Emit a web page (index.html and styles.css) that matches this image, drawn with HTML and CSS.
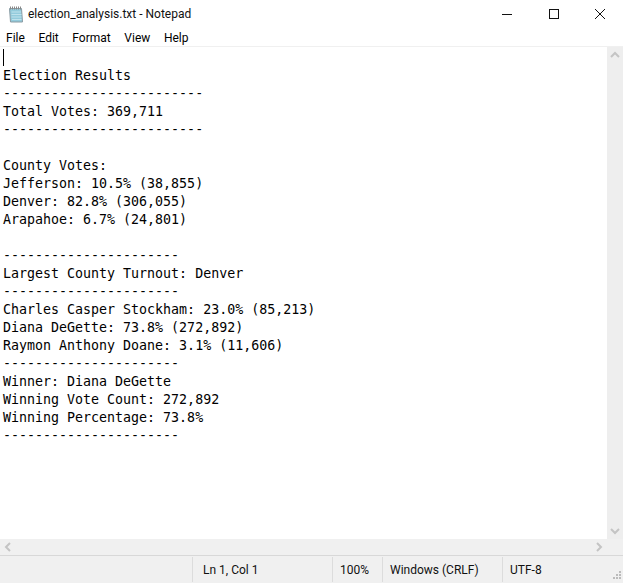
FILE: index.html
```html
<!DOCTYPE html>
<html lang="en">

<head>
  <meta charset="UTF-8">
  <title>election_analysis.txt - Notepad</title>
  <link rel="stylesheet" href="styles.css">
</head>

<body>
  <div class="titlebar">
    <svg class="appicon" width="18" height="18" viewBox="0 0 18 18">
      <path d="M2.500 3.500h12l1 13.500H3.500z" fill="#93cbdc" stroke="#8a9ba3"/>
      <path d="M4.500 7h9.500M4.500 9.500h10M4.500 12h10M5 14.500h9.500" stroke="#bfe2ec"/>
      <path d="M3.500 1.500v3M5.500 1.500v3M7.500 1.500v3M9.500 1.500v3M11.500 1.500v3M13.500 1.500v3" stroke="#888"/>
    </svg>
    <span class="title">election_analysis.txt - Notepad</span>
    <div class="controls">
      <svg class="ctl" width="46" height="24" viewBox="0 0 46 24"><path d="M17 12.500h10" stroke="#111"/></svg>
      <svg class="ctl" width="46" height="24" viewBox="0 0 46 24"><rect x="18.500" y="7.500" width="9" height="9" fill="none" stroke="#111"/></svg>
      <svg class="ctl" width="46" height="24" viewBox="0 0 46 24"><path d="M18 7l10 10M28 7L18 17" stroke="#111"/></svg>
    </div>
  </div>

  <div class="menubar">
    <span>File</span>
    <span>Edit</span>
    <span>Format</span>
    <span>View</span>
    <span>Help</span>
  </div>

  <div class="editor">
    <div class="textarea">
      <div class="caret"></div>
<pre class="text">

Election Results
-------------------------
Total Votes: 369,711
-------------------------

County Votes:
Jefferson: 10.5% (38,855)
Denver: 82.8% (306,055)
Arapahoe: 6.7% (24,801)

----------------------
Largest County Turnout: Denver
----------------------
Charles Casper Stockham: 23.0% (85,213)
Diana DeGette: 73.8% (272,892)
Raymon Anthony Doane: 3.1% (11,606)
----------------------
Winner: Diana DeGette
Winning Vote Count: 272,892
Winning Percentage: 73.8%
----------------------</pre>
    </div>
    <div class="vscroll">
      <svg width="16" height="16" viewBox="0 0 16 16"><path d="M4 10l4-4 4 4" fill="none" stroke="#c4c4c4" stroke-width="2"/></svg>
      <svg width="16" height="16" viewBox="0 0 16 16"><path d="M4 6l4 4 4-4" fill="none" stroke="#c4c4c4" stroke-width="2"/></svg>
    </div>
  </div>

  <div class="hscroll">
    <svg width="16" height="16" viewBox="0 0 16 16"><path d="M10 4L6 8l4 4" fill="none" stroke="#c4c4c4" stroke-width="2"/></svg>
    <svg width="16" height="16" viewBox="0 0 16 16"><path d="M6 4l4 4-4 4" fill="none" stroke="#c4c4c4" stroke-width="2"/></svg>
  </div>

  <div class="statusbar">
    <div class="cell cell-pos">Ln 1, Col 1</div>
    <div class="cell cell-zoom">100%</div>
    <div class="cell cell-eol">Windows (CRLF)</div>
    <div class="cell cell-enc">UTF-8</div>
    <svg class="grip" width="12" height="12" viewBox="0 0 12 12">
      <path d="M9 2h2v2H9zM6 5h2v2H6zM9 5h2v2H9zM3 8h2v2H3zM6 8h2v2H6zM9 8h2v2H9z" fill="#bbb"/>
    </svg>
  </div>
</body>

</html>
```
FILE: styles.css
```css
html,
body {
  height: 100%;
}

body {
  margin: 0;
  display: flex;
  flex-direction: column;
  background: #fff;
  color: #000;
  font-family: Roboto, "Noto Sans", sans-serif;
  font-size: 12px;
  overflow: hidden;
}

.titlebar {
  height: 28px;
  display: flex;
  align-items: center;
  padding-left: 7px;
}

.appicon {
  margin-right: 3px;
}

.title {
  flex: 1;
  color: #111;
}

.controls {
  display: flex;
}

.ctl {
  display: block;
}

.menubar {
  height: 16px;
  padding: 2px 0 0 6px;
  display: flex;
  align-items: center;
  gap: 13.6px;
  border-bottom: 1px solid #f0f0f0;
}

.editor {
  flex: 1;
  display: flex;
  min-height: 0;
}

.textarea {
  flex: 1;
  position: relative;
}

.caret {
  position: absolute;
  left: 3px;
  top: 2px;
  width: 1px;
  height: 17px;
  background: #000;
}

.text {
  margin: 0;
  padding: 2px 0 0 3px;
  font-family: "DejaVu Sans Mono", monospace;
  font-size: 13.3px;
  line-height: 18px;
}

.vscroll {
  width: 16px;
  background: #eee;
  display: flex;
  flex-direction: column;
  justify-content: space-between;
}

.vscroll svg,
.hscroll svg {
  display: block;
}

.hscroll {
  height: 16px;
  background: #f0f0f0;
  display: flex;
  justify-content: space-between;
  padding-right: 16px;
}

.statusbar {
  height: 28px;
  box-sizing: border-box;
  background: #f0f0f0;
  border-top: 1px solid #d8d8d8;
  display: flex;
  position: relative;
}

.cell {
  margin-top: 1px;
  margin-bottom: 1px;
  padding-left: 10px;
  padding-top: 1px;
  border-left: 1px solid #dcdcdc;
  display: flex;
  align-items: center;
  box-sizing: border-box;
  color: #111;
}

.cell-pos {
  margin-left: 192px;
  width: 140px;
}

.cell-zoom {
  width: 50px;
  padding-left: 7px;
}

.cell-eol {
  width: 120px;
  padding-left: 7px;
}

.cell-enc {
  flex: 1;
  padding-left: 7px;
}

.grip {
  position: absolute;
  right: 1px;
  bottom: 2px;
}
```
